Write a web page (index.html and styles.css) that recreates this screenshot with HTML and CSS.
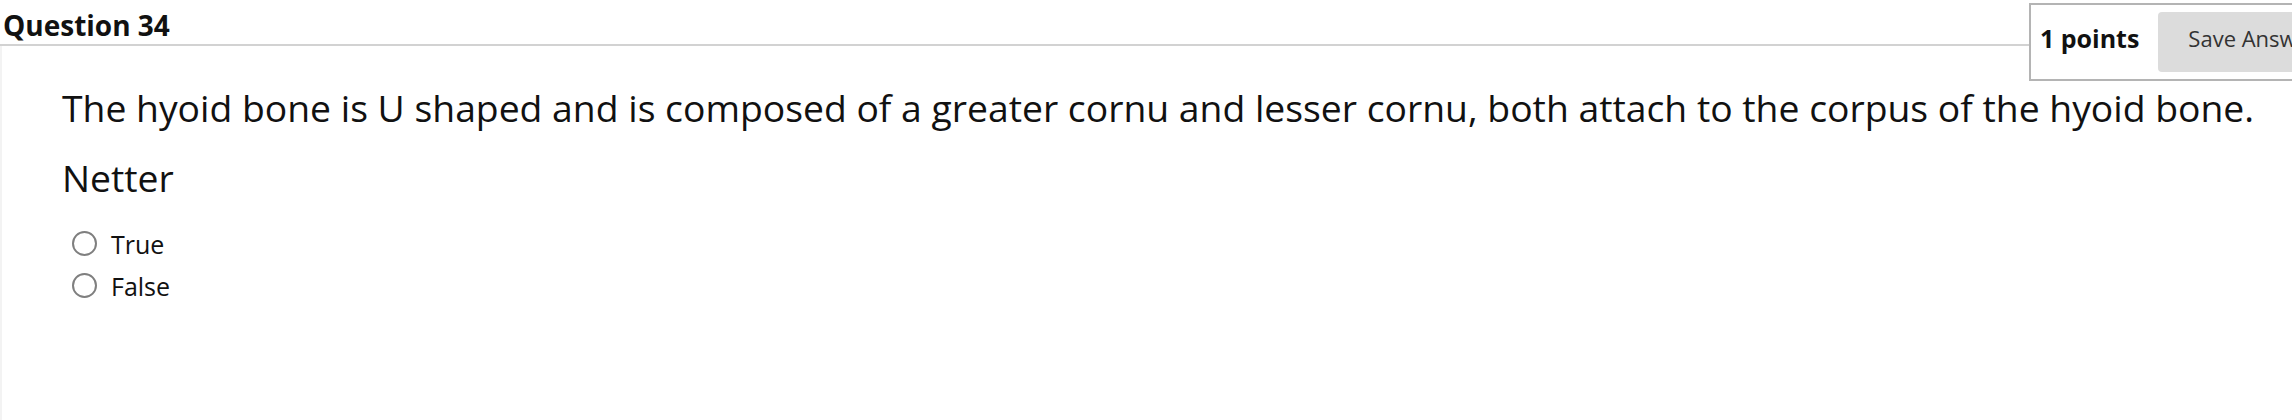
FILE: index.html
```html
<!DOCTYPE html>
<html lang="en">
<head>
    <meta charset="UTF-8">
    <title>Question 34</title>
    <link rel="stylesheet" href="styles.css">
</head>
<body>
    <div class="page">
        <div class="q-header">
            <h2 class="q-title">Question 34</h2>
            <div class="q-points">
                <span class="pts">1 points</span>
                <button class="save-btn">Save Answer</button>
            </div>
        </div>
        <div class="q-body">
            <p class="q-text">The hyoid bone is U shaped and is composed of a greater cornu and lesser cornu, both attach to the corpus of the hyoid bone.</p>
            <p class="q-text">Netter</p>
            <ul class="answers">
                <li class="answer">
                    <input type="radio" name="q34" id="q34-true">
                    <label for="q34-true">True</label>
                </li>
                <li class="answer">
                    <input type="radio" name="q34" id="q34-false">
                    <label for="q34-false">False</label>
                </li>
            </ul>
        </div>
    </div>
</body>
</html>
```

FILE: styles.css
```css
body {
    margin: 0;
    padding: 0;
    background-color: #fff;
    font-family: "Open Sans", "Liberation Sans", sans-serif;
    color: #111;
    overflow: hidden;
}
.page {
    width: 2360px;
}
.q-header {
    display: flex;
    align-items: flex-start;
    height: 46px;
}
.q-title {
    flex: 1;
    margin: 0;
    padding: 6px 0 0 3px;
    font-size: 28px;
    line-height: 38px;
    font-weight: bold;
    border-bottom: 2px solid #d2d2d2;
}
/* floats over the top of the question body */
.q-points {
    position: relative;
    z-index: 1;
    display: flex;
    align-items: flex-start;
    gap: 19px;
    margin-top: 3px;
    padding: 7px 10px 7px 9px;
    border: 2px solid #b4b4b4;
    background-color: #fff;
}
.pts {
    margin-top: 9px;
    font-size: 25px;
    line-height: 34px;
    font-weight: bold;
}
.save-btn {
    height: 60px;
    padding: 0 30px 7px 30px;
    font-family: inherit;
    font-size: 22px;
    line-height: 53px;
    color: #333;
    background-color: #dcdcdc;
    border: none;
    border-radius: 4px;
}
.q-body {
    height: 374px;
    padding: 36.5px 0 0 60px;
    border-left: 2px solid #f3f3f3;
    box-sizing: border-box;
}
.q-text {
    margin: 0 0 20px 0;
    font-size: 37.3px;
    line-height: 50px;
}
.answers {
    list-style: none;
    margin: 0;
    padding: 0 0 0 10px;
}
.answer {
    display: flex;
    align-items: center;
    gap: 14px;
    height: 42px;
    font-size: 25px;
}
.answer input[type="radio"] {
    appearance: none;
    -webkit-appearance: none;
    margin: 0;
    width: 25px;
    height: 25px;
    border: 2px solid #7f7f7f;
    border-radius: 50%;
    background-color: #fff;
}
```
